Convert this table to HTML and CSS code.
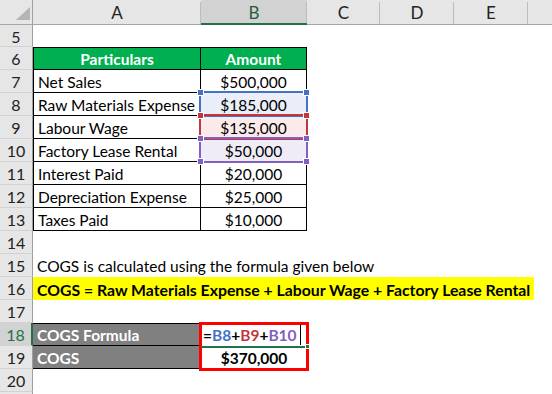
FILE: index.html
```html
<!DOCTYPE html>
<html>
<head>
<meta charset="utf-8">
<link rel="stylesheet" href="styles.css">
</head>
<body>
<div class="sheet">
  <div class="corner"><svg width="33" height="24" viewBox="0 0 33 24"><polygon points="30,7 30,20 16,20" fill="#b5b5b5"/></svg></div>
  <div class="ch">A</div>
  <div class="ch chsel">B</div>
  <div class="ch">C</div>
  <div class="ch">D</div>
  <div class="ch">E</div>
  <div class="ch chlast"></div>

  <div class="rh">5</div><div class="full"></div>

  <div class="rh">6</div><div class="c t th tl">Particulars</div><div class="c t th ctr">Amount</div><div class="rest"></div>
  <div class="rh">7</div><div class="c t tl">Net Sales</div><div class="c t ctr">$500,000</div><div class="rest"></div>
  <div class="rh">8</div><div class="c t tl">Raw Materials Expense</div><div class="c t ctr ref blue"><span class="box"><i class="k k1"></i><i class="k k2"></i><i class="k k3"></i><i class="k k4"></i></span>$185,000</div><div class="rest"></div>
  <div class="rh">9</div><div class="c t tl">Labour Wage</div><div class="c t ctr ref red"><span class="box"><i class="k k1"></i><i class="k k2"></i><i class="k k3"></i><i class="k k4"></i></span>$135,000</div><div class="rest"></div>
  <div class="rh">10</div><div class="c t tl">Factory Lease Rental</div><div class="c t ctr ref purple"><span class="box"><i class="k k1"></i><i class="k k2"></i><i class="k k3"></i><i class="k k4"></i></span>$50,000</div><div class="rest"></div>
  <div class="rh">11</div><div class="c t tl">Interest Paid</div><div class="c t ctr">$20,000</div><div class="rest"></div>
  <div class="rh">12</div><div class="c t tl">Depreciation Expense</div><div class="c t ctr">$25,000</div><div class="rest"></div>
  <div class="rh">13</div><div class="c t tl">Taxes Paid</div><div class="c t ctr">$10,000</div><div class="rest"></div>

  <div class="rh">14</div><div class="full"></div>
  <div class="rh">15</div><div class="full txt">COGS is calculated using the formula given below</div>
  <div class="rh">16</div><div class="full"><div class="yellow">COGS = Raw Materials Expense + Labour Wage + Factory Lease Rental</div></div>
  <div class="rh">17</div><div class="full"></div>

  <div class="rh rhsel">18</div><div class="c gray gtop">COGS Formula</div><div class="c formula"><span class="op">=</span><span class="fb">B8</span><span class="op">+</span><span class="fr">B9</span><span class="op">+</span><span class="fp">B10</span><span class="caret"></span><span class="act"><i class="actk"></i></span><span class="redbox"></span></div><div class="rest"></div>
  <div class="rh">19</div><div class="c gray gbot">COGS</div><div class="c ctr bold">$370,000</div><div class="rest"></div>

  <div class="rh">20</div><div class="full"></div>
  <div class="rh"></div><div class="full"></div>
</div>
</body>
</html>
```

FILE: styles.css
```css
html, body {
  margin: 0;
  padding: 0;
  background: #fff;
  overflow: hidden;
}
.sheet {
  width: 552px;
  height: 394px;
  display: grid;
  grid-template-columns: 33px 168px 106px 73px 74px 74px 24px;
  grid-template-rows: 25px 22px repeat(16, 23px);
  font-family: Lato, "Noto Sans", sans-serif;
  font-size: 15.5px;
  color: #000;
  overflow: hidden;
}
.corner {
  background: #e6e6e6;
  border-right: 1px solid #9f9f9f;
  border-bottom: 1px solid #a6a6a6;
  box-sizing: border-box;
}
.corner svg { display: block; }
.ch {
  background: #e6e6e6;
  border-bottom: 1px solid #a6a6a6;
  box-sizing: border-box;
  display: flex;
  align-items: center;
  justify-content: center;
  color: #222;
  font-size: 17px;
  position: relative;
}
.ch::after {
  content: "";
  position: absolute;
  right: 0;
  top: 2px;
  bottom: 0;
  width: 1px;
  background: #bcbcbc;
}
.chlast::after { display: none; }
.chsel {
  background: #d2d2d2;
  border-bottom: 2px solid #217346;
  color: #1e5e3a;
  padding-top: 1px;
}
.rh {
  grid-column: 1;
  background: #e6e6e6;
  border-right: 1px solid #9f9f9f;
  border-bottom: 1px solid #d2d2d2;
  box-sizing: border-box;
  display: flex;
  align-items: center;
  justify-content: center;
  color: #222;
  font-size: 16px;
  padding-top: 1px;
}
.rhsel {
  background: #d2d2d2;
  color: #217346;
  border-right: 2px solid #217346;
}
.full {
  grid-column: 2 / 8;
  display: flex;
  align-items: center;
  white-space: nowrap;
}
.txt { padding-left: 4px; padding-top: 1px; }
.yellow {
  background: #ffff00;
  width: 501px;
  height: 100%;
  box-sizing: border-box;
  padding-left: 4px;
  padding-top: 1px;
  display: flex;
  align-items: center;
  font-weight: bold;
  font-size: 15.8px;
}
.rest { grid-column: 4 / 8; }
.c {
  box-sizing: border-box;
  display: flex;
  align-items: center;
  padding-left: 4px;
  padding-top: 1px;
  white-space: nowrap;
  position: relative;
}
.t {
  border-right: 1px solid #000;
  border-bottom: 1px solid #000;
}
.tl { border-left: 1px solid #000; }
.th {
  background: #00b050;
  color: #fff;
  font-weight: bold;
  border-top: 1px solid #000;
  justify-content: center;
  padding-left: 0;
}
.ctr { justify-content: center; padding-left: 0; }
.bold { font-weight: bold; }

.ref .box {
  position: absolute;
  left: -2px;
  right: -2px;
  top: -2px;
  bottom: -2px;
  border: 2px solid;
}
.ref .k {
  position: absolute;
  width: 5px;
  height: 5px;
  background: currentColor;
  border: 1px solid #fff;
}
.ref .k1 { left: -4px; top: -4px; }
.ref .k2 { right: -4px; top: -4px; }
.ref .k3 { left: -4px; bottom: -4px; }
.ref .k4 { right: -4px; bottom: -4px; }
.blue { background: #e9eef8; }
.blue .box { border-color: #4472c4; color: #4472c4; z-index: 2; }
.red { background: #fbeaea; }
.red .box { border-color: #c0373f; color: #c0373f; z-index: 3; }
.purple { background: #efebf7; }
.purple .box { border-color: #8060c0; color: #8060c0; z-index: 4; }

.gray {
  background: #808080;
  color: #fff;
  font-weight: bold;
}
.gtop { border-top: 1px solid #000; border-bottom: 1px solid #000; }
.gbot { border-bottom: 1px solid #000; }

.formula {
  font-weight: bold;
  padding-left: 2px;
}
.op { color: #000; }
.fb { color: #4472c4; }
.fr { color: #c0373f; }
.fp { color: #8060c0; }
.caret {
  width: 1px;
  height: 20px;
  background: #000;
  margin-left: 3px;
}
.act {
  position: absolute;
  left: 0;
  right: 0;
  bottom: -2px;
  height: 2px;
  background: #217346;
  z-index: 6;
}
.actk {
  position: absolute;
  right: -3px;
  top: -2px;
  width: 5px;
  height: 5px;
  background: #217346;
  border: 1px solid #fff;
  box-sizing: border-box;
}
.redbox {
  position: absolute;
  left: -2px;
  right: -2px;
  top: -1px;
  bottom: -25px;
  border: 3px solid #ff0000;
  z-index: 5;
  pointer-events: none;
}
```
